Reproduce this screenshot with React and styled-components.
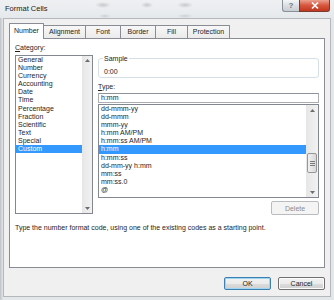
import React from 'react';
import styled, { createGlobalStyle } from 'styled-components';

const GlobalStyle = createGlobalStyle`
  html, body { margin: 0; padding: 0; }
  body {
    width: 334px;
    height: 300px;
    overflow: hidden;
    background: #e2e5e9;
    font-family: "Liberation Sans", Arial, sans-serif;
    font-size: 7px;
    color: #1e1e1e;
  }
`;

const categories = ['General', 'Number', 'Currency', 'Accounting', 'Date', 'Time', 'Percentage', 'Fraction', 'Scientific', 'Text', 'Special', 'Custom'];
const formats = ['dd-mmm-yy', 'dd-mmm', 'mmm-yy', 'h:mm AM/PM', 'h:mm:ss AM/PM', 'h:mm', 'h:mm:ss', 'dd-mm-yy h:mm', 'mm:ss', 'mm:ss.0', '@'];
const tabs = [
  { label: 'Number', width: 35 },
  { label: 'Alignment', width: 43 },
  { label: 'Font', width: 36 },
  { label: 'Border', width: 36 },
  { label: 'Fill', width: 33 },
  { label: 'Protection', width: 43 },
];

function Arrow({ down }) {
  return (
    <svg width="5" height="3" viewBox="0 0 5 3">
      <path d={down ? 'M0 0 L5 0 L2.5 3 Z' : 'M0 3 L5 3 L2.5 0 Z'} fill="#6d6d6d" />
    </svg>
  );
}

export default function App() {
  return (
    <>
      <GlobalStyle />
      <Window>
        <TitleBar>
          <Title>Format Cells</Title>
          <Controls>
            <HelpButton>?</HelpButton>
            <CloseButton>
              <svg width="8" height="7" viewBox="0 0 8 7">
                <path d="M1 0.5 L7 6.5 M7 0.5 L1 6.5" stroke="#fff" strokeWidth="1.6" />
              </svg>
            </CloseButton>
          </Controls>
        </TitleBar>
        <Client>
          <TabRow>
            {tabs.map((t, i) => (
              <Tab key={t.label} $active={i === 0} $width={t.width}>{t.label}</Tab>
            ))}
          </TabRow>
          <Panel>
            <TopRow>
              <CategoryColumn>
                <Label><u>C</u>ategory:</Label>
                <CategoryList>
                  <Items>
                    {categories.map((c) => (
                      <Item key={c} $selected={c === 'Custom'}>{c}</Item>
                    ))}
                  </Items>
                  <Scrollbar $width={10}>
                    <ArrowBox><Arrow /></ArrowBox>
                    <Track />
                    <ArrowBox><Arrow down /></ArrowBox>
                  </Scrollbar>
                </CategoryList>
              </CategoryColumn>
              <RightColumn>
                <SampleBox>
                  <Legend>Sample</Legend>
                  <SampleValue>0:00</SampleValue>
                </SampleBox>
                <TypeLabel><u>T</u>ype:</TypeLabel>
                <TypeInput>h:mm</TypeInput>
                <FormatList>
                  <Items>
                    {formats.map((f, i) => (
                      <Item key={i} $selected={i === 5}>{f}</Item>
                    ))}
                  </Items>
                  <Scrollbar $width={12}>
                    <ArrowBox $h={10}><Arrow /></ArrowBox>
                    <Track>
                      <Thumb>
                        <Grip />
                        <Grip />
                        <Grip />
                      </Thumb>
                    </Track>
                    <ArrowBox $h={10}><Arrow down /></ArrowBox>
                  </Scrollbar>
                </FormatList>
                <DeleteRow>
                  <DisabledButton>Delete</DisabledButton>
                </DeleteRow>
              </RightColumn>
            </TopRow>
            <Description>Type the number format code, using one of the existing codes as a starting point.</Description>
          </Panel>
          <ButtonRow>
            <Button $default>OK</Button>
            <Button>Cancel</Button>
          </ButtonRow>
        </Client>
      </Window>
    </>
  );
}

const Window = styled.div`
  width: 334px;
  height: 300px;
  display: flex;
  flex-direction: column;
  box-sizing: border-box;
  padding-bottom: 3px;
  background:
    linear-gradient(90deg, rgba(120, 125, 130, 0.35) 0, rgba(255, 255, 255, 0) 3px),
    #e4e7ea;
`;

const TitleBar = styled.div`
  height: 18px;
  flex: none;
  display: flex;
  justify-content: space-between;
  align-items: flex-start;
  padding-left: 5px;
  background:
    radial-gradient(ellipse 8px 3px at 103px 5px, rgba(150, 155, 160, 0.45), transparent),
    radial-gradient(ellipse 6px 3px at 147px 5px, rgba(150, 155, 160, 0.45), transparent),
    radial-gradient(ellipse 8px 3px at 185px 5px, rgba(150, 155, 160, 0.45), transparent),
    radial-gradient(ellipse 6px 2px at 105px 16px, rgba(150, 155, 160, 0.35), transparent),
    radial-gradient(ellipse 8px 2px at 185px 16px, rgba(150, 155, 160, 0.35), transparent),
    linear-gradient(#eef0f2, #e6e9ec);
`;

const Title = styled.div`
  line-height: 18px;
  font-size: 7.5px;
  color: #1a1a1a;
`;

const Controls = styled.div`
  display: flex;
  margin-right: 4px;
`;

const HelpButton = styled.div`
  width: 17px;
  height: 12px;
  box-sizing: border-box;
  border: 1px solid #8a9098;
  border-top: none;
  border-right: none;
  border-radius: 0 0 0 3px;
  background: linear-gradient(#f4f5f6, #d9dde2 55%, #c9ced4);
  display: flex;
  align-items: center;
  justify-content: center;
  font-size: 8px;
  font-weight: bold;
  color: #6a7380;
  line-height: 1;
`;

const CloseButton = styled.div`
  width: 31px;
  height: 12px;
  box-sizing: border-box;
  border: 1px solid #7d3a30;
  border-top: none;
  border-radius: 0 0 3px 0;
  background: linear-gradient(#eaa08f, #d7553c 50%, #c2371f);
  display: flex;
  align-items: center;
  justify-content: center;
`;

const Client = styled.div`
  flex: 1;
  margin: 0 3px;
  box-sizing: border-box;
  border: 1px solid #b4b8bd;
  background: #f0f0f0;
  padding: 4px 5px 0;
  display: flex;
  flex-direction: column;
`;

const TabRow = styled.div`
  display: flex;
  align-items: flex-start;
  height: 16px;
  margin-bottom: -1px;
`;

const Tab = styled.div`
  box-sizing: border-box;
  width: ${(p) => p.$width}px;
  text-align: center;
  border: 1px solid #898c95;
  border-bottom: none;
  margin-left: -1px;
  &:first-child { margin-left: 0; }
  position: relative;
  height: ${(p) => (p.$active ? '16px' : '13px')};
  margin-top: ${(p) => (p.$active ? '0' : '2px')};
  line-height: ${(p) => (p.$active ? '14px' : '12px')};
  background: ${(p) => (p.$active ? '#fff' : 'linear-gradient(#f7f7f7, #ebebeb)')};
  z-index: ${(p) => (p.$active ? 1 : 0)};
  border-radius: 1px 1px 0 0;
`;

const Panel = styled.div`
  height: 230px;
  box-sizing: border-box;
  background: #fff;
  border: 1px solid #898c95;
  padding: 4px 5px;
`;

const TopRow = styled.div`
  display: flex;
  gap: 5px;
  align-items: flex-start;
`;

const CategoryColumn = styled.div`
  width: 78px;
  flex: none;
`;

const Label = styled.div`
  line-height: 9px;
  height: 9px;
`;

const TypeLabel = styled(Label)`
  margin-top: 4px;
`;

const CategoryList = styled.div`
  margin-top: 3px;
  height: 159px;
  box-sizing: border-box;
  border: 1px solid #828790;
  display: flex;
`;

const Items = styled.div`
  flex: 1;
  min-width: 0;
`;

const Item = styled.div`
  height: 8.1px;
  line-height: 8.1px;
  padding-left: 2px;
  white-space: nowrap;
  background: ${(p) => (p.$selected ? '#3399ff' : 'transparent')};
  color: ${(p) => (p.$selected ? '#fff' : 'inherit')};
`;

const Scrollbar = styled.div`
  width: ${(p) => p.$width}px;
  flex: none;
  display: flex;
  flex-direction: column;
  background: linear-gradient(90deg, #e6e6e6, #f2f2f2);
`;

const ArrowBox = styled.div`
  height: ${(p) => p.$h || 9}px;
  flex: none;
  display: flex;
  align-items: center;
  justify-content: center;
`;

const Track = styled.div`
  flex: 1;
  position: relative;
`;

const Thumb = styled.div`
  position: absolute;
  left: 1px;
  right: 1px;
  top: 38px;
  height: 20px;
  box-sizing: border-box;
  border: 1px solid #979797;
  border-radius: 2px;
  background: linear-gradient(90deg, #f1f1f1, #d8d8d8);
  display: flex;
  flex-direction: column;
  align-items: center;
  justify-content: center;
  gap: 1px;
`;

const Grip = styled.div`
  width: 5px;
  height: 1px;
  background: #7b7b7b;
`;

const RightColumn = styled.div`
  flex: 1;
  min-width: 0;
`;

const SampleBox = styled.div`
  margin-top: 15px;
  height: 20px;
  box-sizing: border-box;
  border: 1px solid #d5dfe5;
  border-radius: 3px;
  padding: 0 4px;
`;

const Legend = styled.div`
  width: fit-content;
  margin-top: -5px;
  padding: 0 1px;
  background: #fff;
  line-height: 9px;
  height: 9px;
`;

const SampleValue = styled.div`
  margin-top: 4px;
  line-height: 9px;
  padding-left: 1px;
`;

const TypeInput = styled.div`
  margin-top: 2px;
  height: 10px;
  box-sizing: border-box;
  border: 1px solid #abadb3;
  border-top-color: #8e9299;
  line-height: 8px;
  padding-left: 2px;
`;

const FormatList = styled.div`
  margin-top: 1px;
  height: 94px;
  box-sizing: border-box;
  border: 1px solid #828790;
  display: flex;
`;

const DeleteRow = styled.div`
  margin-top: 3px;
  display: flex;
  justify-content: flex-end;
`;

const DisabledButton = styled.div`
  width: 48px;
  height: 14px;
  box-sizing: border-box;
  border: 1px solid #b9bcbf;
  border-radius: 2px;
  background: #f4f4f4;
  color: #8d8d8d;
  display: flex;
  align-items: center;
  justify-content: center;
`;

const Description = styled.div`
  margin-top: 8px;
  line-height: 9px;
  white-space: nowrap;
`;

const ButtonRow = styled.div`
  margin-top: 9px;
  display: flex;
  justify-content: flex-end;
  gap: 7px;
`;

const Button = styled.div`
  width: 47px;
  height: 13px;
  box-sizing: border-box;
  border: 1px solid ${(p) => (p.$default ? '#3c7fb1' : '#707070')};
  border-radius: 2px;
  background: linear-gradient(#f2f2f2, #ebebeb 50%, #dddddd 51%, #cfcfcf);
  box-shadow: ${(p) => (p.$default ? 'inset 0 0 0 1px #9fd5f0' : 'inset 0 0 0 1px #fbfbfb')};
  display: flex;
  align-items: center;
  justify-content: center;
`;
